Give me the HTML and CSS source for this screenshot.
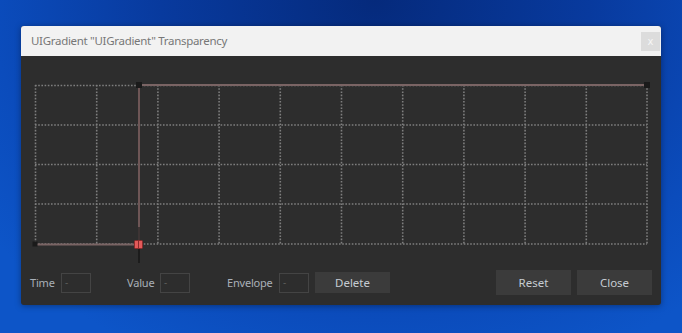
FILE: index.html
```html
<!DOCTYPE html>
<html>
<head>
<meta charset="utf-8">
<link rel="stylesheet" href="styles.css">
</head>
<body>
<div class="window">
  <div class="titlebar">
    <span class="title">UIGradient "UIGradient" Transparency</span>
    <span class="close-x">x</span>
  </div>
  <div class="content">
    <svg class="graph" width="640" height="210" viewBox="0 0 640 210">
      <g class="grid" stroke="#7e7e7e" stroke-width="1.6" stroke-dasharray="1.6 1.6" fill="none">
        <line x1="14" y1="29.5" x2="626" y2="29.5"/>
        <line x1="14" y1="69" x2="626" y2="69"/>
        <line x1="14" y1="108.5" x2="626" y2="108.5"/>
        <line x1="14" y1="148" x2="626" y2="148"/>
        <line x1="14" y1="188" x2="626" y2="188"/>
        <line x1="14.5" y1="29" x2="14.5" y2="188"/>
        <line x1="75.7" y1="29" x2="75.7" y2="188"/>
        <line x1="136.9" y1="29" x2="136.9" y2="188"/>
        <line x1="198.1" y1="29" x2="198.1" y2="188"/>
        <line x1="259.3" y1="29" x2="259.3" y2="188"/>
        <line x1="320.5" y1="29" x2="320.5" y2="188"/>
        <line x1="381.7" y1="29" x2="381.7" y2="188"/>
        <line x1="442.9" y1="29" x2="442.9" y2="188"/>
        <line x1="504.1" y1="29" x2="504.1" y2="188"/>
        <line x1="565.3" y1="29" x2="565.3" y2="188"/>
        <line x1="626" y1="29" x2="626" y2="188"/>
      </g>
      <g fill="none" stroke-width="2">
        <line x1="14" y1="188.5" x2="118" y2="188.5" stroke="#7a6464"/>
        <line x1="118" y1="29" x2="626" y2="29" stroke="#7a6464"/>
        <line x1="118" y1="29" x2="118" y2="171" stroke="#6e5656"/>
        <line x1="118" y1="171" x2="118" y2="185" stroke="#3d3434"/>
        <line x1="118" y1="192" x2="118" y2="207" stroke="#1c1c1c"/>
      </g>
      <rect x="11.5" y="185.5" width="5" height="5" fill="#1a1a1a"/>
      <rect x="115" y="26" width="6" height="6" fill="#1a1a1a"/>
      <rect x="623" y="26" width="6" height="6" fill="#1a1a1a"/>
      <rect x="113.5" y="184.5" width="8" height="8" rx="1" fill="#e25a5a" stroke="#8a2a2a" stroke-width="1"/>
      <line x1="117.5" y1="185" x2="117.5" y2="192" stroke="#8a2a2a" stroke-width="1"/>
    </svg>
    <div class="controls">
      <span class="label time-label">Time</span>
      <span class="field">-</span>
      <span class="label value-label">Value</span>
      <span class="field">-</span>
      <span class="label env-label">Envelope</span>
      <span class="field env-field">-</span>
      <span class="btn delete">Delete</span>
      <span class="spacer"></span>
      <span class="btn big">Reset</span>
      <span class="btn big">Close</span>
    </div>
  </div>
</div>
</body>
</html>
```
FILE: styles.css
```css
html, body {
  margin: 0;
  padding: 0;
}
body {
  width: 682px;
  height: 333px;
  overflow: hidden;
  background: radial-gradient(ellipse 70% 120% at 55% 0%, #052a7c 0%, #083a9e 45%, #0b4cbc 80%, #0d55c8 100%);
  font-family: "Open Sans", "Noto Sans", sans-serif;
}
.window {
  margin-left: 21px;
  margin-top: 26px;
  width: 640px;
  height: 279px;
  border-radius: 3px;
  overflow: hidden;
  background: #2d2d2d;
  box-shadow: 0 1px 6px rgba(0, 0, 0, 0.35);
}
.titlebar {
  height: 30px;
  background: #f2f2f2;
  display: flex;
  align-items: center;
  justify-content: space-between;
  padding-left: 10px;
  padding-right: 1px;
  box-sizing: border-box;
}
.title {
  font-family: "Noto Sans", sans-serif;
  font-size: 11.5px;
  color: #777777;
  letter-spacing: -0.3px;
  position: relative;
  top: -1px;
}
.close-x {
  width: 19px;
  height: 19px;
  background: #dcdcdc;
  color: #f6f6f6;
  font-size: 10px;
  display: flex;
  align-items: center;
  justify-content: center;
  font-family: "DejaVu Sans", sans-serif;
}
.content {
  height: 249px;
  display: flex;
  flex-direction: column;
}
.graph {
  display: block;
}
.controls {
  display: flex;
  align-items: center;
  height: 25px;
  padding: 4px 9px 0 9px;
  font-family: "Noto Sans", sans-serif;
  font-size: 11px;
}
.label {
  color: #a9b0b8;
  white-space: nowrap;
  letter-spacing: -0.2px;
}
.time-label {
  width: 24px;
}
.value-label {
  margin-left: 36px;
  width: 26px;
}
.env-label {
  margin-left: 37px;
  width: 46px;
}
.field {
  height: 18px;
  border: 1px solid #444444;
  background: #2d2d2d;
  color: #5c5c5c;
  font-size: 10px;
  line-height: 16px;
  padding-left: 3px;
  box-sizing: content-box;
  margin-left: 7px;
  width: 25px;
}
.env-field {
  margin-left: 6px;
}
.btn {
  background: #3b3b3b;
  color: #c6ccd2;
  display: flex;
  align-items: center;
  justify-content: center;
  width: 75px;
  font-size: 11.5px;
}
.delete {
  height: 21px;
  margin-left: 6px;
}
.spacer {
  flex: 1;
}
.big {
  height: 25px;
  margin-left: 6px;
}
```
